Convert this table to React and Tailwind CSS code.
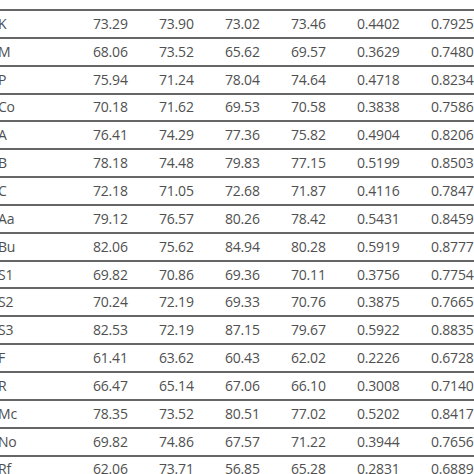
import React from "react";

const rows = [
  ["K", "73.29", "73.90", "73.02", "73.46", "0.4402", "0.7925"],
  ["M", "68.06", "73.52", "65.62", "69.57", "0.3629", "0.7480"],
  ["P", "75.94", "71.24", "78.04", "74.64", "0.4718", "0.8234"],
  ["Co", "70.18", "71.62", "69.53", "70.58", "0.3838", "0.7586"],
  ["A", "76.41", "74.29", "77.36", "75.82", "0.4904", "0.8206"],
  ["B", "78.18", "74.48", "79.83", "77.15", "0.5199", "0.8503"],
  ["C", "72.18", "71.05", "72.68", "71.87", "0.4116", "0.7847"],
  ["Aa", "79.12", "76.57", "80.26", "78.42", "0.5431", "0.8459"],
  ["Bu", "82.06", "75.62", "84.94", "80.28", "0.5919", "0.8777"],
  ["S1", "69.82", "70.86", "69.36", "70.11", "0.3756", "0.7754"],
  ["S2", "70.24", "72.19", "69.33", "70.76", "0.3875", "0.7665"],
  ["S3", "82.53", "72.19", "87.15", "79.67", "0.5922", "0.8835"],
  ["F", "61.41", "63.62", "60.43", "62.02", "0.2226", "0.6728"],
  ["R", "66.47", "65.14", "67.06", "66.10", "0.3008", "0.7140"],
  ["Mc", "78.35", "73.52", "80.51", "77.02", "0.5202", "0.8417"],
  ["No", "69.82", "74.86", "67.57", "71.22", "0.3944", "0.7656"],
  ["Rf", "62.06", "73.71", "56.85", "65.28", "0.2831", "0.6889"],
];

export default function App() {
  return (
    <div
      className="w-[474px] h-[474px] overflow-hidden bg-white pt-[9px]"
      style={{ fontFamily: '"Open Sans", "Liberation Sans", sans-serif' }}
    >
      <div className="ml-[-2px] w-[480px]">
        {rows.map((r, i) => (
          <div
            key={i}
            className="grid grid-cols-[95px_66px_66px_66px_66px_74px_1fr] h-[27.85px] border-t-2 border-[#666666] items-center text-[14px] leading-none text-[#505050] tracking-[-0.2px]"
          >
            {r.map((c, j) => (
              <div key={j} className="whitespace-nowrap">
                {c}
              </div>
            ))}
          </div>
        ))}
      </div>
    </div>
  );
}
